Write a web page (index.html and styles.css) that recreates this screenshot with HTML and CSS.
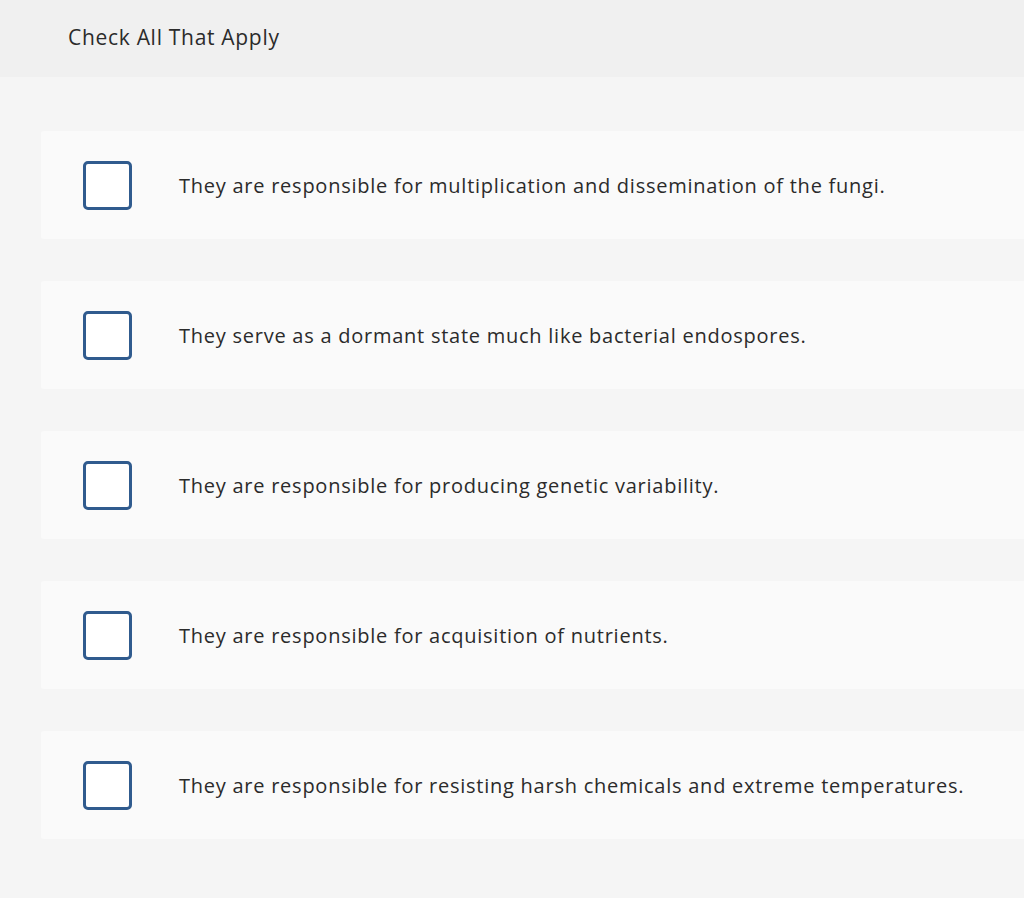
FILE: index.html
```html
<!DOCTYPE html>
<html lang="en">
<head>
<meta charset="utf-8">
<title>Check All That Apply</title>
<link rel="stylesheet" href="styles.css">
</head>
<body>
<header class="head">Check All That Apply</header>
<main class="list">
  <label class="card"><span class="box"></span><span class="txt">They are responsible for multiplication and dissemination of the fungi.</span></label>
  <label class="card"><span class="box"></span><span class="txt">They serve as a dormant state much like bacterial endospores.</span></label>
  <label class="card"><span class="box"></span><span class="txt">They are responsible for producing genetic variability.</span></label>
  <label class="card"><span class="box"></span><span class="txt">They are responsible for acquisition of nutrients.</span></label>
  <label class="card"><span class="box"></span><span class="txt">They are responsible for resisting harsh chemicals and extreme temperatures.</span></label>
</main>
</body>
</html>
```
FILE: styles.css
```css
html, body {
  margin: 0;
  padding: 0;
  background: #f5f5f5;
  font-family: "Open Sans", "Lato", sans-serif;
  color: #2b2b2b;
}
.head {
  height: 77px;
  box-sizing: border-box;
  background: #f0f0f0;
  padding-left: 68px;
  padding-top: 23px;
  font-size: 21px;
  line-height: 28px;
  letter-spacing: 0.7px;
}
.list {
  display: flex;
  flex-direction: column;
  gap: 42px;
  padding: 54px 0 59px 41px;
}
.card {
  display: flex;
  align-items: center;
  height: 108px;
  background: #fafafa;
  border-radius: 3px 0 0 3px;
  padding-left: 42px;
}
.box {
  width: 49px;
  height: 49px;
  box-sizing: border-box;
  border: 3px solid #305b8e;
  border-radius: 5px;
  background: #fff;
  flex: none;
  margin-right: 47px;
}
.txt {
  font-size: 20px;
  line-height: 26px;
  letter-spacing: 0.75px;
  padding-top: 1px;
}
```
